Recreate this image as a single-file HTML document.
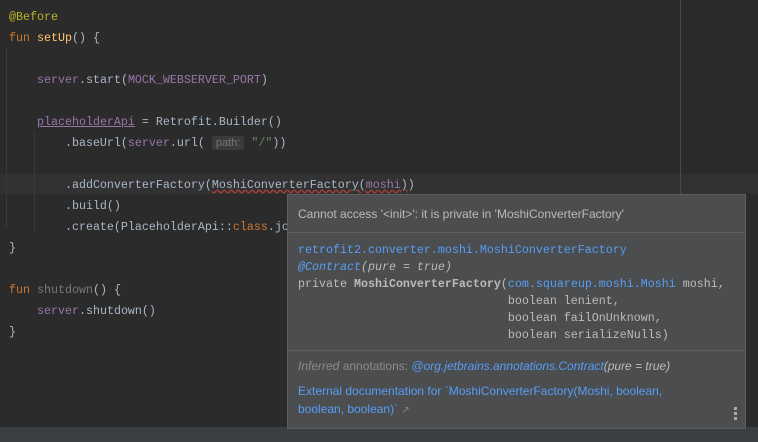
<!DOCTYPE html>
<html><head><style>
body{margin:0;width:758px;height:442px;background:#2b2b2b;overflow:hidden;position:relative;font-family:"Liberation Mono",monospace;}
.code{position:absolute;left:9px;top:0;font-size:11.67px;color:#a9b7c6;white-space:pre;}
.l{position:absolute;height:21px;line-height:21px;left:0}
.k{color:#cc7832}.a{color:#bbb529}.f{color:#ffc66d}.p{color:#9876aa}.s{color:#6a8759}.g{color:#787878}
.u{text-decoration:underline}
.err{text-decoration:underline wavy #bc3f3c}
.hint{background:#3b3b3b;color:#787878;border-radius:3px;font-family:"Liberation Sans",sans-serif;font-size:11px;padding:1px 4px}
.pop{position:absolute;left:287px;top:194px;width:459px;height:235px;background:#4b4d4f;border:1px solid #5c5e60;box-sizing:border-box;font-family:"Liberation Sans",sans-serif;color:#bbbbbb}
.pc{position:absolute;left:10px;font-family:"Liberation Mono",monospace;font-size:11.67px;white-space:pre;line-height:17px;color:#bbbbbb}
.b{color:#589df6}
</style></head><body>
<div style="position:absolute;left:0;top:174px;width:758px;height:20px;background:#323232"></div>
<div style="position:absolute;left:680px;top:0;width:1px;height:194px;background:#4a4a4a"></div>
<div style="position:absolute;left:6px;top:48px;width:1px;height:180px;background:#393939"></div>
<div style="position:absolute;left:34px;top:132px;width:1px;height:100px;background:#393939"></div>
<div style="position:absolute;left:6px;top:111px;width:1px;height:20px;background:#393939"></div>
<div style="position:absolute;left:0;top:427px;width:758px;height:15px;background:#3c3f41"></div>
<div class="code">
<div class="l" style="top:7px"><span class="a">@Before</span></div>
<div class="l" style="top:28px"><span class="k">fun </span><span class="f">setUp</span>() {</div>
<div class="l" style="top:70px">    <span class="p">server</span>.start(<span class="p">MOCK_WEBSERVER_PORT</span>)</div>
<div class="l" style="top:112px">    <span class="p u">placeholderApi</span> = Retrofit.Builder()</div>
<div class="l" style="top:133px">        .baseUrl(<span class="p">server</span>.url( <span class="hint">path:</span> <span class="s">"/"</span>))</div>
<div class="l" style="top:175px">        .addConverterFactory(<span class="err">MoshiConverterFactory(<span class="p">moshi</span>)</span>)</div>
<div class="l" style="top:196px">        .build()</div>
<div class="l" style="top:217px">        .create(PlaceholderApi::<span class="k">class</span>.jo</div>
<div class="l" style="top:238px">}</div>
<div class="l" style="top:280px"><span class="k">fun </span><span class="g">shutdown</span>() {</div>
<div class="l" style="top:301px">    <span class="p">server</span>.shutdown()</div>
<div class="l" style="top:322px">}</div>
</div>
<div class="pop">
<div style="position:absolute;left:10px;top:12px;font-size:12px">Cannot access '&lt;init&gt;': it is private in 'MoshiConverterFactory'</div>
<div style="position:absolute;left:0;top:37px;width:100%;height:1px;background:#5c5e60"></div>
<div class="pc" style="top:47px"><span class="b">retrofit2.converter.moshi.MoshiConverterFactory</span>
<i><span class="b">@Contract</span>(pure = true)</i>
private <b>MoshiConverterFactory</b>(<span class="b">com.squareup.moshi.Moshi</span> moshi,
                              boolean lenient,
                              boolean failOnUnknown,
                              boolean serializeNulls)</div>
<div style="position:absolute;left:0;top:155px;width:100%;height:1px;background:#5c5e60"></div>
<div style="position:absolute;left:10px;top:164px;font-size:12px;color:#8c8c8c"><i>Inferred</i> annotations: <i><span class="b">@org.jetbrains.annotations.Contract</span><span style="color:#bbb">(pure = true)</span></i></div>
<div style="position:absolute;left:10px;top:187px;font-size:12px;line-height:18px;color:#589df6;width:400px">External documentation for `MoshiConverterFactory(Moshi, boolean, boolean, boolean)` <span style="color:#888;font-size:10px">↗</span></div>
<div style="position:absolute;left:446px;top:212px;width:3px;height:3px;background:#aaa;box-shadow:0 5px #aaa,0 10px #aaa"></div>
</div>
</body></html>
